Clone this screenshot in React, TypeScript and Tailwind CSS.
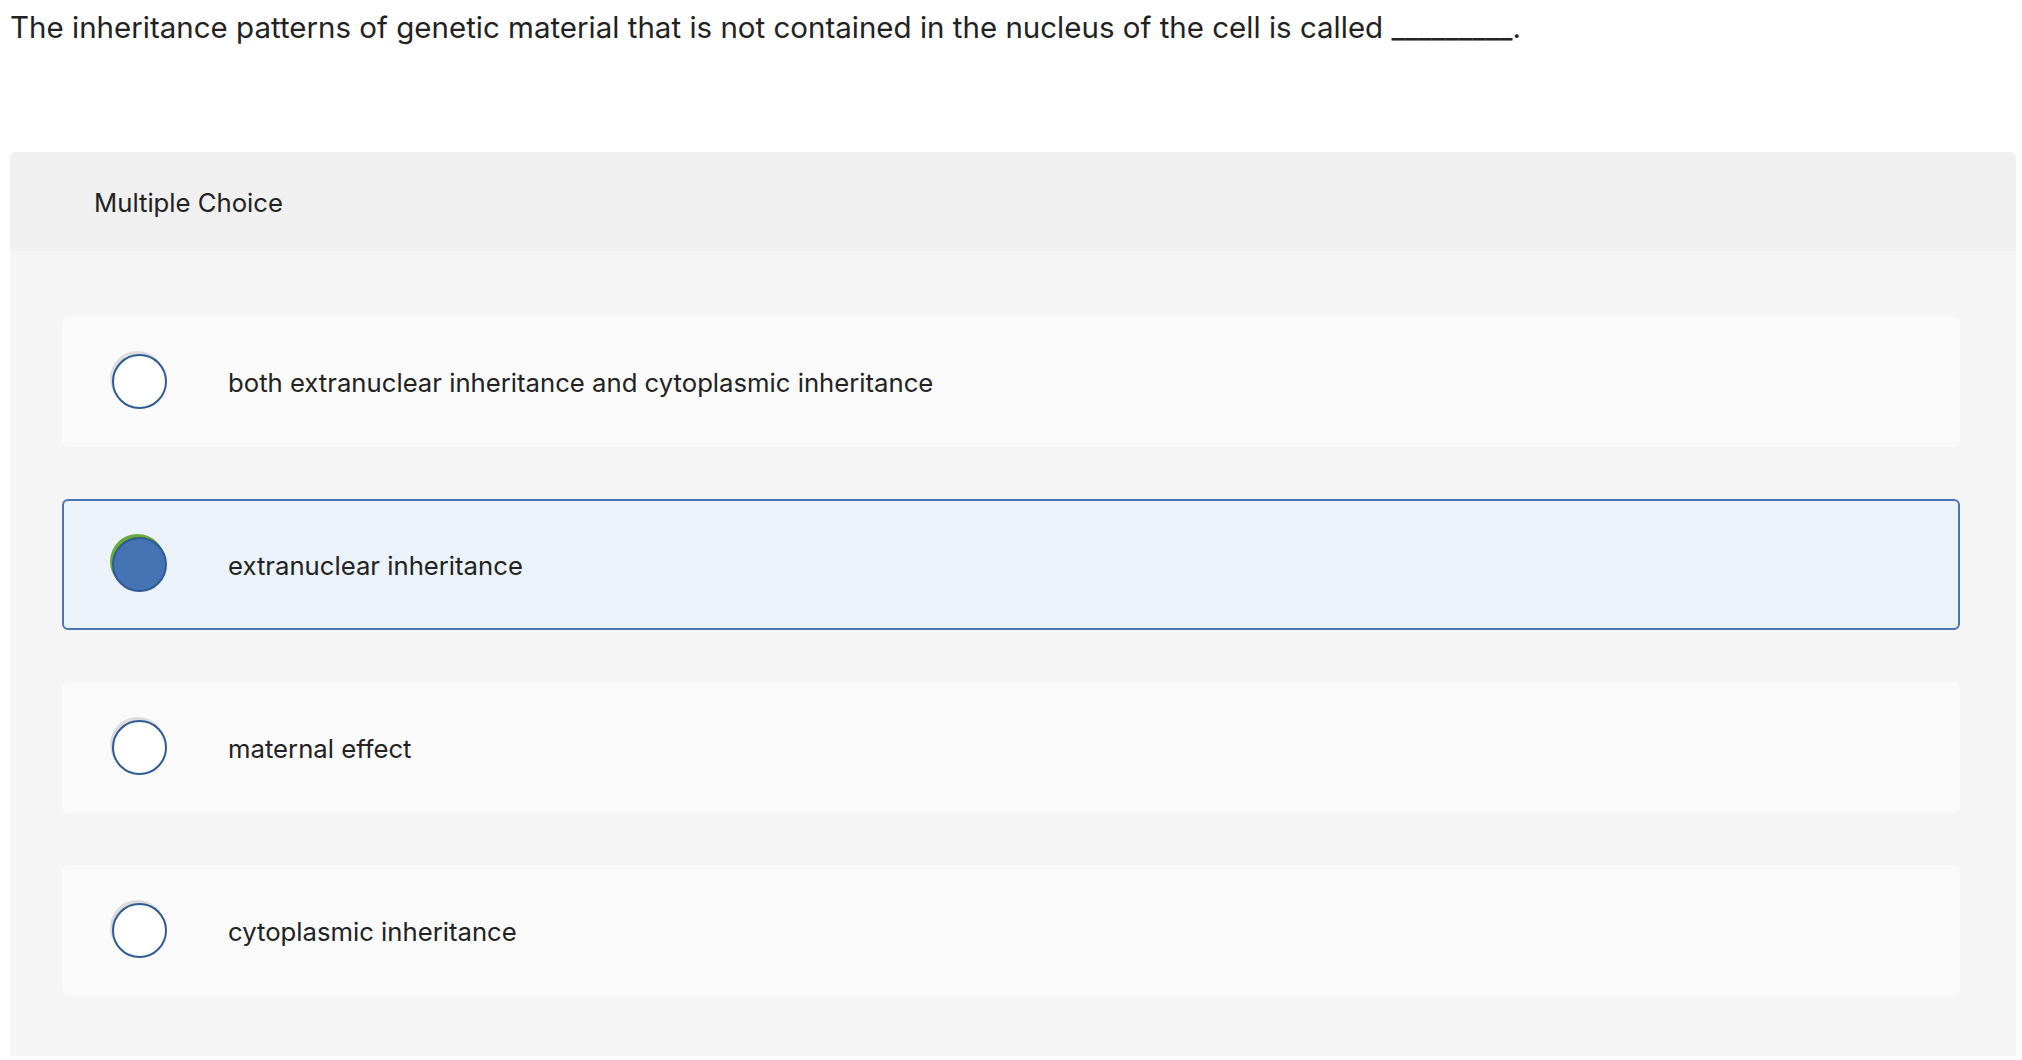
const options = [
  { label: "both extranuclear inheritance and cytoplasmic inheritance", selected: false },
  { label: "extranuclear inheritance", selected: true },
  { label: "maternal effect", selected: false },
  { label: "cytoplasmic inheritance", selected: false },
];

function Radio({ selected }: { selected: boolean }) {
  return (
    <div className="relative w-[55px] h-[55px] shrink-0">
      <div
        className={
          "absolute -left-[2px] -top-[3px] w-[55px] h-[55px] rounded-full " +
          (selected ? "bg-[#6aaa3a]" : "bg-[#dcdcdc]")
        }
      />
      <div
        className={
          "absolute inset-0 rounded-full border-2 border-[#2f5b93] " +
          (selected ? "bg-[#4673b3]" : "bg-white")
        }
      />
    </div>
  );
}

export default function App() {
  return (
    <div className="min-h-screen bg-white text-[#222222] font-['Inter',sans-serif]">
      <div className="h-[152px] pl-[10px] pt-[8px]">
        <p className="text-[29.5px] leading-[38px]">
          The inheritance patterns of genetic material that is not contained in the nucleus of the cell is called _________.
        </p>
      </div>

      <div className="mx-[10px] mr-[6px] rounded-t-md bg-[#f5f5f5] pb-[60px]">
        <div className="h-[99px] rounded-t-md bg-[#f0f0f0] flex items-center pl-[84px]">
          <span className="text-[25.7px] pt-[4px]">Multiple Choice</span>
        </div>

        <div className="flex flex-col gap-[52px] pt-[65px] pl-[52px] pr-[56px]">
          {options.map((o) => (
            <div
              key={o.label}
              className={
                "h-[131px] rounded-md flex items-center pl-[48px] " +
                (o.selected
                  ? "bg-[#ebf2fa] border-2 border-[#4a76b5]"
                  : "bg-[#fafafa] border-2 border-transparent")
              }
            >
              <Radio selected={o.selected} />
              <span className="ml-[61px] text-[25.7px] pt-[4px]">{o.label}</span>
            </div>
          ))}
        </div>
      </div>
    </div>
  );
}
